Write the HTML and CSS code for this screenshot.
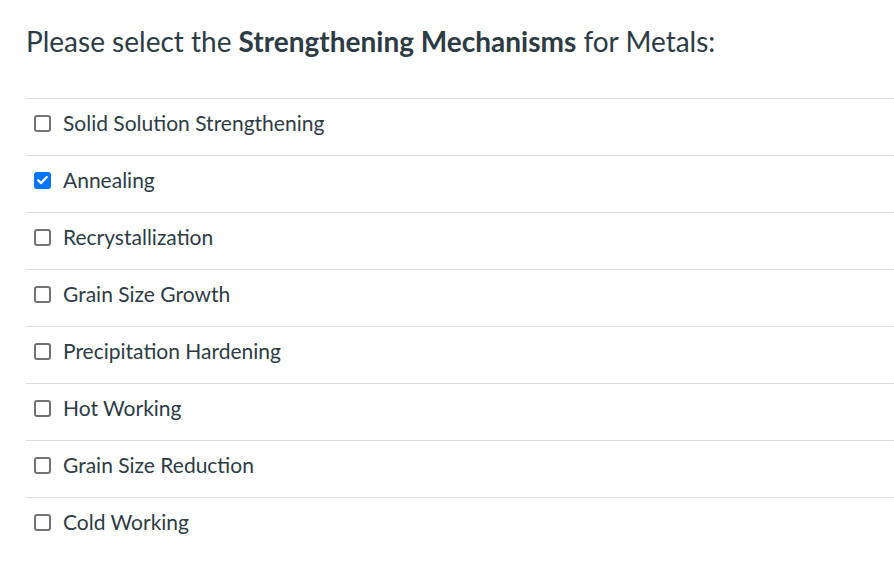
FILE: index.html
```html
<!DOCTYPE html>
<html>
<head>
<meta charset="utf-8">
<link rel="stylesheet" href="styles.css">
</head>
<body>
<div class="question">
  <h1 class="prompt">Please select the <strong>Strengthening Mechanisms</strong> for Metals:</h1>
  <ul class="options">
    <li class="option"><span class="box"></span><span class="label">Solid Solution Strengthening</span></li>
    <li class="option"><span class="box checked"><svg viewBox="0 0 16 16" width="14" height="14"><path d="M2.8 8.4 L6.3 11.8 L13.2 4.4" fill="none" stroke="#fff" stroke-width="2.8" stroke-linecap="round" stroke-linejoin="round"/></svg></span><span class="label">Annealing</span></li>
    <li class="option"><span class="box"></span><span class="label">Recrystallization</span></li>
    <li class="option"><span class="box"></span><span class="label">Grain Size Growth</span></li>
    <li class="option"><span class="box"></span><span class="label">Precipitation Hardening</span></li>
    <li class="option"><span class="box"></span><span class="label">Hot Working</span></li>
    <li class="option"><span class="box"></span><span class="label">Grain Size Reduction</span></li>
    <li class="option"><span class="box"></span><span class="label">Cold Working</span></li>
  </ul>
</div>
</body>
</html>
```
FILE: styles.css
```css
html, body {
  margin: 0;
  padding: 0;
  background: #fff;
}
body {
  font-family: Lato, "Noto Sans", sans-serif;
  color: #2d3b45;
}
.question {
  padding: 20px 0 0 26px;
}
.prompt {
  margin: 0;
  font-size: 28px;
  font-weight: 400;
  line-height: 42px;
  color: #2d3b45;
}
.prompt strong {
  font-weight: 700;
}
.options {
  list-style: none;
  margin: 36px 0 0 0;
  padding: 0;
}
.option {
  box-sizing: border-box;
  display: flex;
  align-items: center;
  height: 57px;
  border-top: 1px solid #dcdcdc;
  padding: 0 0 8px 8px;
  font-size: 21px;
}
.box {
  box-sizing: border-box;
  width: 17px;
  height: 17px;
  border: 2px solid #737373;
  border-radius: 3px;
  margin-right: 12px;
  display: flex;
  align-items: center;
  justify-content: center;
  flex-shrink: 0;
}
.box.checked {
  background: #0075ff;
  border-color: #0075ff;
}
.label {
  line-height: 24px;
}
```
